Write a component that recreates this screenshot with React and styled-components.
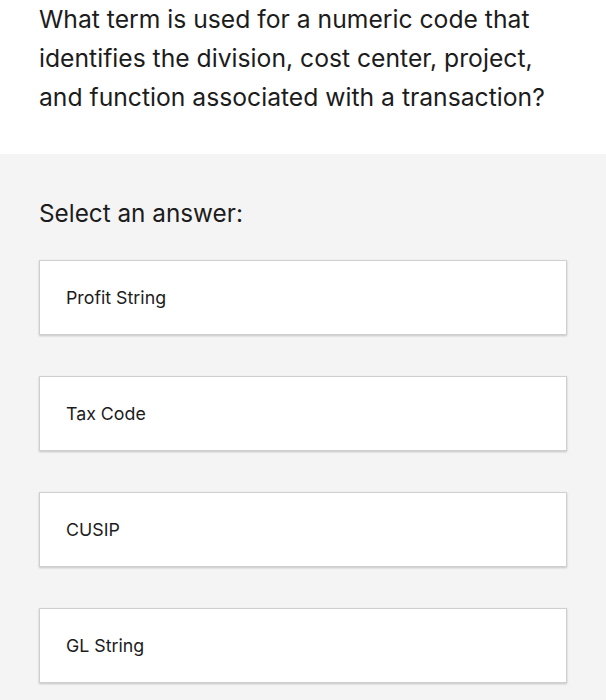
import React from 'react'
import styled, { createGlobalStyle } from 'styled-components'

const GlobalStyle = createGlobalStyle`
	body {
		margin: 0;
		background: #f4f4f4;
		font-family: Inter, "Liberation Sans", Arial, sans-serif;
		color: #1c1c1c;
	}
`

const answers = ['Profit String', 'Tax Code', 'CUSIP', 'GL String']

const App = () => {
	return (
		<>
			<GlobalStyle />
			<Page>
				<QuestionSection>
					<Question>
						What term is used for a numeric code that identifies the division, cost center, project,
						and function associated with a transaction?
					</Question>
				</QuestionSection>
				<AnswerSection>
					<Prompt>Select an answer:</Prompt>
					<AnswerList>
						{answers.map((a) => (
							<AnswerCard key={a}>{a}</AnswerCard>
						))}
					</AnswerList>
				</AnswerSection>
			</Page>
		</>
	)
}

export default App

const Page = styled.div`
	width: 606px;
	height: 700px;
	overflow: hidden;
	display: flex;
	flex-direction: column;
`
const QuestionSection = styled.div`
	background: #ffffff;
	padding: 0 30px 37px 39px;
	height: 154px;
	box-sizing: border-box;
`
const Question = styled.p`
	margin: 0;
	font-size: 24.7px;
	line-height: 39px;
	max-width: 530px;
`
const AnswerSection = styled.div`
	flex: 1;
	background: #f4f4f4;
	padding: 44px 39px 0 39px;
`
const Prompt = styled.h2`
	margin: 0 0 32px 0;
	font-weight: 400;
	font-size: 24.3px;
	line-height: 30px;
`
const AnswerList = styled.div`
	display: flex;
	flex-direction: column;
	gap: 41px;
	width: 528px;
`
const AnswerCard = styled.div`
	height: 75px;
	box-sizing: border-box;
	background: #ffffff;
	border: 1px solid #cfcfcf;
	box-shadow: 0 1px 2px rgba(0, 0, 0, 0.2);
	display: flex;
	align-items: center;
	padding-left: 26px;
	font-size: 17.8px;
	color: #1c1c1c;
`
